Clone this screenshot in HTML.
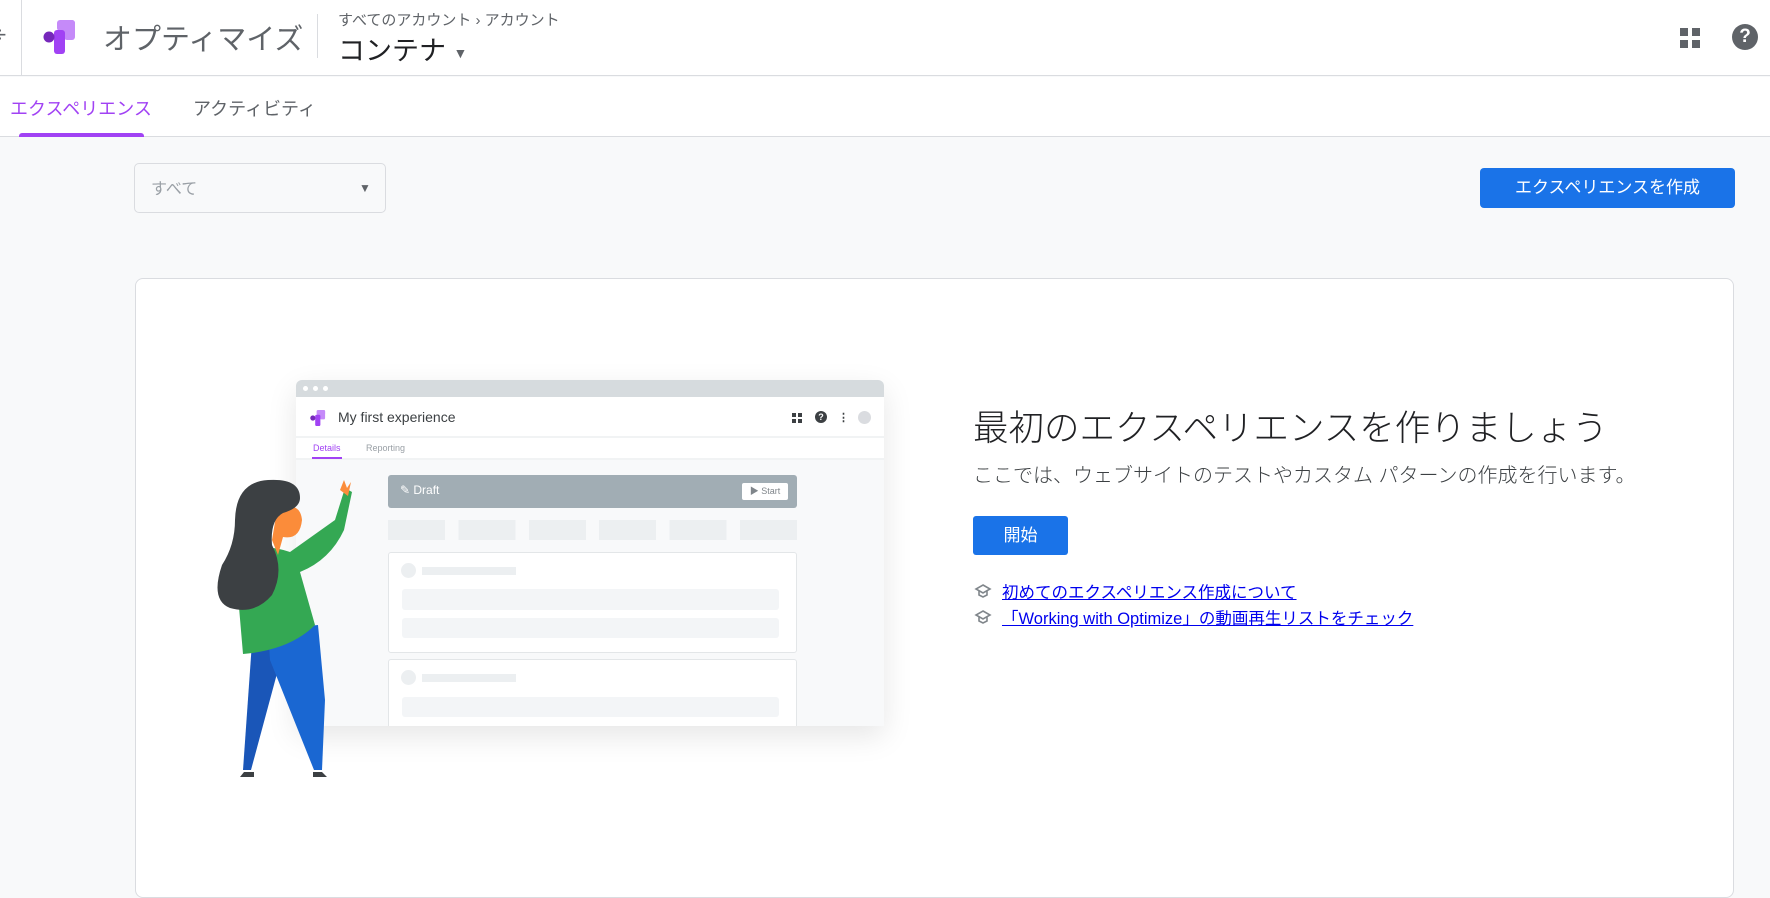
<!DOCTYPE html>
<html><head><meta charset="utf-8"><style>
*{margin:0;padding:0;box-sizing:border-box}
body{width:1770px;height:826px;overflow:hidden;background:#f8f9fa;font-family:"Liberation Sans","Noto Sans CJK JP",sans-serif;position:relative}
.a{position:absolute;white-space:nowrap}
</style></head><body>
<div class="a" style="left:0;top:0;width:1770px;height:76px;background:#fff;border-bottom:1px solid #dadce0"></div>
<div class="a" style="left:21px;top:0;width:1px;height:76px;background:#dadce0"></div>
<div class="a" style="left:-6px;top:22px;font-size:22px;color:#5f6368">÷</div>
<svg class="a" style="left:43px;top:20px" width="36" height="34" viewBox="0 0 36 34">
<rect x="14" y="0" width="18" height="11" rx="3" fill="#c58af9"/>
<rect x="21" y="0" width="11" height="20" rx="3" fill="#c58af9"/>
<rect x="11" y="10" width="11" height="24" rx="3" fill="#a142f4"/>
<circle cx="6" cy="17" r="5.5" fill="#7627bb"/>
</svg>
<div class="a" style="left:103px;top:16px;font-size:29px;color:#5f6368">オプティマイズ</div>
<div class="a" style="left:317px;top:14px;width:1px;height:44px;background:#dadce0"></div>
<div class="a" style="left:338px;top:9px;font-size:15px;color:#5f6368">すべてのアカウント › アカウント</div>
<div class="a" style="left:338px;top:29px;font-size:27px;color:#202124">コンテナ <span style="font-size:14px;color:#5f6368;vertical-align:middle">▼</span></div>
<div class="a" style="left:1680px;top:28px;width:8px;height:8px;background:#5f6368"></div>
<div class="a" style="left:1692px;top:28px;width:8px;height:8px;background:#5f6368"></div>
<div class="a" style="left:1680px;top:40px;width:8px;height:8px;background:#5f6368"></div>
<div class="a" style="left:1692px;top:40px;width:8px;height:8px;background:#5f6368"></div>
<div class="a" style="left:1732px;top:24px;width:26px;height:26px;border-radius:50%;background:#5f6368;color:#fff;font-weight:bold;font-size:19px;text-align:center;line-height:26px">?</div>
<div class="a" style="left:0;top:77px;width:1770px;height:60px;background:#fff;border-bottom:1px solid #dadce0"></div>
<div class="a" style="left:10px;top:95px;font-size:18px;color:#a142f4">エクスペリエンス</div>
<div class="a" style="left:193px;top:95px;font-size:18px;color:#5f6368">アクティビティ</div>
<div class="a" style="left:19px;top:133px;width:125px;height:4px;background:#a142f4;border-radius:3px 3px 0 0"></div>
<div class="a" style="left:134px;top:163px;width:252px;height:50px;border:1px solid #dadce0;border-radius:5px;background:#f8f9fa"></div>
<div class="a" style="left:151px;top:175px;font-size:16px;color:#9aa0a6">すべて</div>
<div class="a" style="left:359px;top:181px;font-size:12px;color:#5f6368">▼</div>
<div class="a" style="left:1480px;top:168px;width:255px;height:40px;background:#1a73e8;border-radius:4px;color:#fff;font-size:17px;text-align:center;line-height:40px">エクスペリエンスを作成</div>
<div class="a" style="left:135px;top:278px;width:1599px;height:620px;background:#fff;border:1px solid #dadce0;border-radius:8px"></div>
<!-- mock window -->
<div class="a" style="left:296px;top:380px;width:588px;height:346px;background:#f8f9fa;border-radius:6px 6px 0 0;box-shadow:0 10px 30px rgba(0,0,0,.1);overflow:hidden">
 <div class="a" style="left:0;top:0;width:588px;height:17px;background:#d6dbde"></div>
 <div class="a" style="left:7px;top:6px;width:5px;height:5px;border-radius:50%;background:#fff"></div>
 <div class="a" style="left:17px;top:6px;width:5px;height:5px;border-radius:50%;background:#fff"></div>
 <div class="a" style="left:27px;top:6px;width:5px;height:5px;border-radius:50%;background:#fff"></div>
 <div class="a" style="left:0;top:17px;width:588px;height:41px;background:#fff;border-bottom:2px solid #f1f3f4"></div>
 <svg class="a" style="left:14px;top:30px" width="17" height="16" viewBox="0 0 36 34"><rect x="14" y="0" width="18" height="11" rx="3" fill="#c58af9"/><rect x="21" y="0" width="11" height="20" rx="3" fill="#c58af9"/><rect x="11" y="10" width="11" height="24" rx="3" fill="#a142f4"/><circle cx="6" cy="17" r="5.5" fill="#7627bb"/></svg>
 <div class="a" style="left:42px;top:29px;font-size:14px;color:#3c4043">My first experience</div>
 <div class="a" style="left:496px;top:33px;width:4px;height:4px;background:#3c4043;box-shadow:6px 0 #3c4043,0 6px #3c4043,6px 6px #3c4043"></div>
 <div class="a" style="left:519px;top:31px;width:12px;height:12px;border-radius:50%;background:#3c4043;color:#fff;font-size:9px;font-weight:bold;text-align:center;line-height:12px">?</div>
 <div class="a" style="left:542px;top:31px;font-size:11px;color:#3c4043;font-weight:bold">⋮</div>
 <div class="a" style="left:562px;top:31px;width:13px;height:13px;border-radius:50%;background:#dadce0"></div>
 <div class="a" style="left:0;top:58px;width:588px;height:22px;background:#fff;border-bottom:2px solid #f1f3f4"></div>
 <div class="a" style="left:17px;top:63px;font-size:9px;color:#a142f4">Details</div>
 <div class="a" style="left:70px;top:63px;font-size:9px;color:#9aa0a6">Reporting</div>
 <div class="a" style="left:16px;top:77px;width:30px;height:2px;background:#a142f4"></div>
 <div class="a" style="left:92px;top:95px;width:409px;height:33px;background:#a1adb4;border-radius:3px"></div>
 <div class="a" style="left:104px;top:103px;font-size:12px;color:#fff">✎ Draft</div>
 <div class="a" style="left:446px;top:103px;width:46px;height:17px;background:#fff;border-radius:2px;font-size:9px;color:#80868b;text-align:center;line-height:17px">▶ Start</div>
 <div class="a" style="left:92px;top:140px;width:409px;height:20px;background:repeating-linear-gradient(90deg,#eceff1 0 57px,transparent 57px 70.4px)"></div>
 <div class="a" style="left:92px;top:172px;width:409px;height:101px;background:#fff;border:1px solid #e3e6e8;border-radius:3px"></div>
 <div class="a" style="left:105px;top:183px;width:15px;height:15px;border-radius:50%;background:#eceff1"></div>
 <div class="a" style="left:126px;top:187px;width:94px;height:8px;background:#eceff1"></div>
 <div class="a" style="left:106px;top:209px;width:377px;height:21px;background:#f3f5f7;border-radius:3px"></div>
 <div class="a" style="left:106px;top:238px;width:377px;height:20px;background:#f3f5f7;border-radius:3px"></div>
 <div class="a" style="left:92px;top:279px;width:409px;height:80px;background:#fff;border:1px solid #e3e6e8;border-radius:3px"></div>
 <div class="a" style="left:105px;top:290px;width:15px;height:15px;border-radius:50%;background:#eceff1"></div>
 <div class="a" style="left:126px;top:294px;width:94px;height:8px;background:#eceff1"></div>
 <div class="a" style="left:106px;top:317px;width:377px;height:20px;background:#f3f5f7;border-radius:3px"></div>
</div>
<svg class="a" style="left:0;top:0" width="400" height="826" viewBox="0 0 400 826">
 <path d="M253 628 L243 770 L251 770 L282 655 Z" fill="#1a56b8"/>
 <path d="M268 630 L318 625 L325 700 L322 770 L314 770 L270 660 Z" fill="#1a67d2"/>
 <path d="M244 772 h10 v5 h-14z M313 772 h9 l5 5 h-14z" fill="#3c4043"/>
 <path d="M235 560 Q255 540 290 552 L335 520 L345 488 L352 492 L344 530 Q330 560 300 572 L315 625 Q290 650 243 654 Z" fill="#34a853"/>
 <path d="M340 490 l4 -10 l3 8 l4 -6 l-3 14 z" fill="#fb8c3a"/>
 <path d="M277 510 Q300 500 302 520 Q300 540 283 537 L278 555 L272 540 Z" fill="#fb8c3a"/>
 <path d="M300 498 Q300 478 268 480 Q236 482 235 520 Q235 545 222 565 Q210 600 230 608 Q255 615 272 595 Q285 570 272 545 Q270 520 283 513 Q300 508 300 498 Z" fill="#3c4043"/>
</svg>
<div class="a" style="left:973px;top:400px;font-size:35.5px;font-weight:300;color:#202124">最初のエクスペリエンスを作りましょう</div>
<div class="a" style="left:973px;top:459px;font-size:20px;font-weight:300;color:#3c4043">ここでは、ウェブサイトのテストやカスタム パターンの作成を行います。</div>
<div class="a" style="left:973px;top:516px;width:95px;height:39px;background:#1a73e8;border-radius:3px;color:#fff;font-size:17px;text-align:center;line-height:39px">開始</div>
<svg class="a" style="left:974px;top:583px" width="18" height="16" viewBox="0 0 18 16"><path d="M9 2 L16 6 L9 10 L2 6 Z M5 8 v4 l4 2 l4 -2 v-4" fill="none" stroke="#80868b" stroke-width="1.6"/></svg>
<svg class="a" style="left:974px;top:609px" width="18" height="16" viewBox="0 0 18 16"><path d="M9 2 L16 6 L9 10 L2 6 Z M5 8 v4 l4 2 l4 -2 v-4" fill="none" stroke="#80868b" stroke-width="1.6"/></svg>
<div class="a" style="left:1002px;top:579px;font-size:16.5px;text-decoration:underline;color:#0000ee"> 初めてのエクスペリエンス作成について</div>
<div class="a" style="left:1002px;top:605px;font-size:16.5px;text-decoration:underline;color:#0000ee">「Working with Optimize」の動画再生リストをチェック</div>
</body></html>
